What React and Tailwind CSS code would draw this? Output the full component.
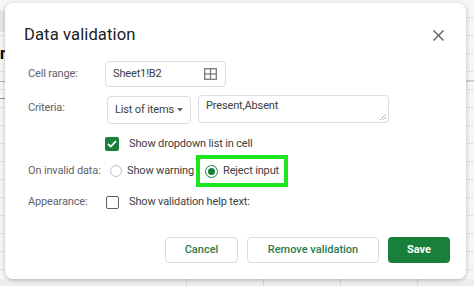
import React from "react";

function GridIcon() {
  return (
    <svg width="13" height="12" viewBox="0 0 13 12" fill="none" stroke="#7a7a7a" strokeWidth="1.3">
      <rect x="0.7" y="0.7" width="11.6" height="10.6" />
      <line x1="6.5" y1="0.7" x2="6.5" y2="11.3" />
      <line x1="0.7" y1="6" x2="12.3" y2="6" />
    </svg>
  );
}

export default function App() {
  return (
    <div
      className="relative w-[474px] h-[286px] overflow-hidden bg-[#f6f6f6]"
      style={{ fontFamily: "Roboto, 'Noto Sans', sans-serif" }}
    >
      {/* spreadsheet behind */}
      <div className="absolute inset-0 bg-[repeating-linear-gradient(to_bottom,transparent_0px,transparent_17px,#e3e3e3_17px,#e3e3e3_18px)]" />
      <div className="absolute left-0 top-[10px] w-[6px] h-[22px] bg-[#e6e6e6]" />
      <div className="absolute left-0 top-[46px] text-[16px] font-bold text-black leading-none">n</div>
      <div className="absolute left-0 top-[81px] w-[6px] h-[1px] bg-[#9db3cf]" />
      <div className="absolute left-0 top-[98px] w-[6px] h-[1px] bg-[#7f95b3]" />
      <div className="absolute right-0 top-[80px] w-[8px] h-[2px] bg-[#cfcfcf]" />
      <div className="absolute left-0 right-0 top-[279px] h-[7px] bg-[#ededed]" />
      <div className="absolute top-[279px] left-[186px] w-[1px] h-[7px] bg-[#d6d6d6]" />
      <div className="absolute top-[279px] left-[263px] w-[1px] h-[7px] bg-[#d6d6d6]" />
      <div className="absolute top-[279px] left-[340px] w-[1px] h-[7px] bg-[#d6d6d6]" />
      <div className="absolute top-[279px] left-[417px] w-[1px] h-[7px] bg-[#d6d6d6]" />

      {/* dialog */}
      <div className="absolute left-[5px] top-[3px] w-[461px] h-[276px] bg-white rounded-[8px] shadow-[0_1px_4px_rgba(0,0,0,0.25)] flex flex-col">
        {/* title */}
        <div className="flex items-center justify-between pl-[19px] pr-[22px] pt-[20px] h-[44px]">
          <div className="text-[16.6px] text-[#202124] leading-none tracking-[0.1px]">Data validation</div>
          <svg width="11" height="11" viewBox="0 0 11 11" stroke="#5f6368" strokeWidth="1.4">
            <line x1="0.5" y1="0.5" x2="10.5" y2="10.5" />
            <line x1="10.5" y1="0.5" x2="0.5" y2="10.5" />
          </svg>
        </div>

        <div className="flex flex-col pl-[23px] text-[11px] tracking-[-0.15px] text-[#3c4043] whitespace-nowrap">
          {/* cell range */}
          <div className="flex items-center mt-[14px] h-[26px]">
            <div className="w-[77px] text-[#5f6368]">Cell range:</div>
            <div className="w-[121px] h-[26px] border border-[#dadce0] rounded-[4px] flex items-center justify-between pl-[7px] pr-[8px]">
              <span className="text-[#3c4043]">Sheet1!B2</span>
              <GridIcon />
            </div>
          </div>

          {/* criteria */}
          <div className="flex items-start mt-[8px] h-[29px]">
            <div className="w-[79px] text-[#5f6368] mt-[5px]">Criteria:</div>
            <div className="w-[84px] h-[28px] mt-[1px] border border-[#dadce0] rounded-[4px] flex items-center justify-between pl-[7px] pr-[7px]">
              <span>List of items</span>
              <svg width="6" height="4" viewBox="0 0 6 4"><path d="M0 0L6 0L3 3.5Z" fill="#5f6368" /></svg>
            </div>
            <div className="relative ml-[7px] w-[191px] h-[28px] border border-[#dadce0] rounded-[4px] pl-[7px] pt-[3px] leading-[14px]">
              Present,Absent
              <svg className="absolute right-[2px] bottom-[2px]" width="6" height="6" viewBox="0 0 6 6" stroke="#9aa0a6" strokeWidth="0.8">
                <line x1="6" y1="0" x2="0" y2="6" />
                <line x1="6" y1="3" x2="3" y2="6" />
              </svg>
            </div>
          </div>

          {/* show dropdown */}
          <div className="flex items-center mt-[13px] h-[14px]">
            <div className="ml-[77px] w-[14px] h-[14px] rounded-[2px] bg-[#188038] flex items-center justify-center">
              <svg width="10" height="8" viewBox="0 0 10 8" fill="none" stroke="white" strokeWidth="1.8">
                <path d="M1 4L3.8 6.6L9 1.2" />
              </svg>
            </div>
            <span className="ml-[10px]">Show dropdown list in cell</span>
          </div>

          {/* on invalid data */}
          <div className="flex items-center mt-[4px] h-[32px]">
            <div className="w-[82px] text-[#5f6368]">On invalid data:</div>
            <div className="w-[12px] h-[12px] rounded-full border border-[#bdc1c6]" />
            <span className="ml-[5px]">Show warning</span>
            <div className="ml-[2px] w-[92px] h-[32px] border-[4px] border-[#1ee61e] flex items-center pl-[5px]">
              <div className="w-[13px] h-[13px] rounded-full border-[1.5px] border-[#188038] flex items-center justify-center">
                <div className="w-[7px] h-[7px] rounded-full bg-[#188038]" />
              </div>
              <span className="ml-[5px]">Reject input</span>
            </div>
          </div>

          {/* appearance */}
          <div className="flex items-center mt-[8px] h-[14px]">
            <div className="w-[78px] text-[#5f6368]">Appearance:</div>
            <div className="w-[13px] h-[13px] rounded-[2px] border-[1.5px] border-[#5f6368]" />
            <span className="ml-[10px]">Show validation help text:</span>
          </div>
        </div>

        {/* buttons */}
        <div className="flex justify-end gap-[9px] pr-[16px] mt-[28px]">
          <button className="w-[73px] h-[26px] rounded-[4px] border border-[#dadce0] text-[11px] font-medium text-[#2d7a4b]">Cancel</button>
          <button className="w-[132px] h-[26px] rounded-[4px] border border-[#dadce0] text-[11px] font-medium text-[#2d7a4b]">Remove validation</button>
          <button className="w-[62px] h-[26px] rounded-[4px] bg-[#188038] text-[11px] font-bold text-white">Save</button>
        </div>
      </div>
    </div>
  );
}
